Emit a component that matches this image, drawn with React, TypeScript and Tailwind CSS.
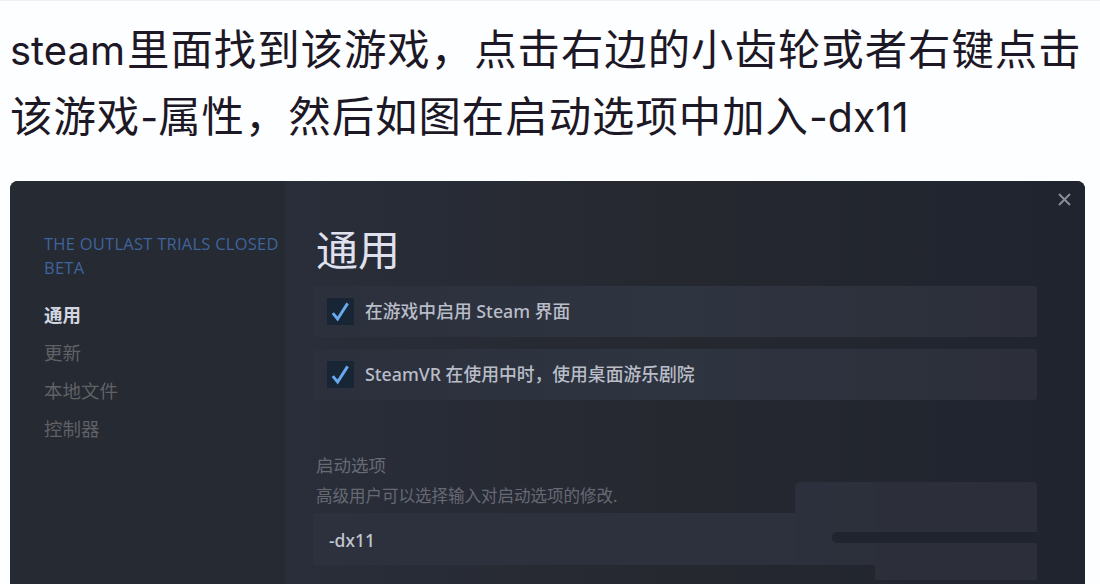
interface MenuItem {
  label: string;
  active?: boolean;
}

const menuItems: MenuItem[] = [
  { label: '通用', active: true },
  { label: '更新' },
  { label: '本地文件' },
  { label: '控制器' },
];

function Sidebar() {
  return (
    <aside className="w-[275px] shrink-0 pl-[34px] pt-[51px] bg-[#262a32]">
      <h2 className="font-['Open_Sans','Noto_Sans_CJK_SC',sans-serif] text-[16.5px] leading-6 tracking-[0.25px] text-[#3f639c] whitespace-nowrap">
        THE OUTLAST TRIALS CLOSED
        <br />
        BETA
      </h2>
      <ul className="mt-[16px]">
        {menuItems.map((item) => (
          <li
            key={item.label}
            className={`h-[38px] text-[18.5px] leading-[38px] ${
              item.active ? 'font-bold text-[#d3d6e0]' : 'text-[#5f6167]'
            }`}
          >
            {item.label}
          </li>
        ))}
      </ul>
    </aside>
  );
}

function OptionRow({ label }: { label: string }) {
  return (
    <label className="flex items-center h-[51px] w-[724px] pl-[14px] rounded-[3px] bg-linear-to-r from-[#2b303c] via-[#2e3440] to-[#2c2f3a]">
      <span className="flex items-center justify-center w-[27px] h-[27px] bg-[#182534]">
        <svg width="19" height="21" viewBox="0 0 19 21" fill="none">
          <path d="M1.8 12.2 6.6 18 16.6 2.4" stroke="#68a8ee" strokeWidth="2.9" />
        </svg>
      </span>
      <span className="ml-[11px] mt-[-2px] text-[17.8px] leading-6 font-medium text-[#b9bdc8] whitespace-nowrap">
        {label}
      </span>
    </label>
  );
}

function LaunchOptions() {
  return (
    <section className="flex mt-[52px] h-[132px]">
      <div className="w-[482px]">
        <h3 className="ml-[3px] text-[17.5px] leading-[26px] text-[#666a73]">启动选项</h3>
        <p className="ml-[3px] mt-[5px] text-[16.5px] leading-[26px] text-[#666974] whitespace-nowrap">
          高级用户可以选择输入对启动选项的修改.
        </p>
        <div className="mt-[4px] h-[52px] pl-[16px] bg-[#2c313d] text-[17.5px] leading-[54px] font-medium text-[#c3c6ce]">
          -dx11
        </div>
      </div>

      {/* Stepped blocks to the right of the input */}
      <div className="w-[37px] h-[83px] mt-[30px] rounded-tl-[5px] bg-[#2c303c]" />
      <div className="w-[43px] mt-[30px]">
        <div className="h-[50px] bg-[#2c303b]" />
        <div className="bg-[#2c303b]">
          <div className="h-[11px] bg-[#20242f] rounded-l-[5px]" />
        </div>
        <div className="h-[22px] bg-[#2c303b]" />
      </div>
      <div className="w-[162px] mt-[30px]">
        <div className="h-[50px] rounded-tr-[3px] bg-[#2c2f3a]" />
        <div className="h-[11px] bg-[#20242f]" />
        <div className="h-[37px] rounded-tr-[3px] bg-[#2c2f3a]" />
      </div>
    </section>
  );
}

export default function App() {
  return (
    <div className="flex flex-col w-[1100px] h-[584px] overflow-hidden bg-[#fdfeff] border-t border-[#eef0f2] font-['Noto_Sans','Noto_Sans_CJK_SC',sans-serif]">
      <p className="h-[180px] pl-[10px] pt-[16px] font-['Inter','Noto_Sans_CJK_SC',sans-serif] text-[42.4px] leading-[66px] text-[#1d1826] whitespace-nowrap">
        <span className="text-[40px]">steam</span>
        <span className="ml-[2px] tracking-[1px]">里面找到该游戏，点击右边的小齿轮或者右键点击</span>
        <br />
        <span className="tracking-[1px]">该游戏</span>
        <span className="text-[39px]">-</span>
        <span className="tracking-[1px]">属性，然后如图在启动选项中加入</span>
        <span className="text-[41px]">-dx11</span>
      </p>

      <div className="flex grow ml-[10px] w-[1075px] rounded-t-[8px] overflow-hidden bg-[#232731]">
        <Sidebar />
        <main className="grow pl-[28px] bg-linear-to-r from-[#2a2e3a] via-[#25282f] to-[#20242f]">
          <div className="flex justify-between h-[105px]">
            <h1 className="ml-[3px] mt-[39px] text-[42px] leading-[60px] text-[#dfe2ee]">通用</h1>
            <svg className="mt-[12px] mr-[14px]" width="13" height="13" viewBox="0 0 13 13" fill="none">
              <path d="M1 1 12 12M12 1 1 12" stroke="#8b8e98" strokeWidth="1.9" />
            </svg>
          </div>
          <div className="flex flex-col gap-[12px]">
            <OptionRow label="在游戏中启用 Steam 界面" />
            <OptionRow label="SteamVR 在使用中时，使用桌面游乐剧院" />
          </div>
          <LaunchOptions />
        </main>
      </div>
    </div>
  );
}
